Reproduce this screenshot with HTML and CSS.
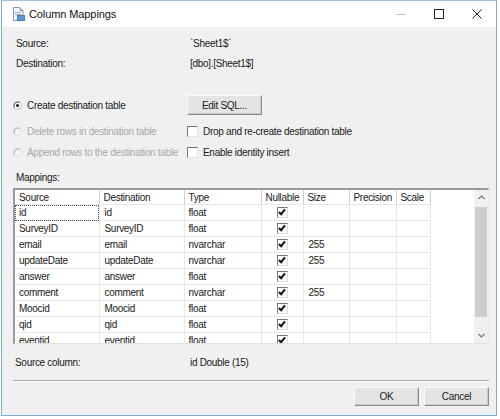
FILE: index.html
```html
<!DOCTYPE html>
<html>
<head>
<meta charset="utf-8">
<link rel="stylesheet" href="styles.css">
</head>
<body>
<div class="window">
  <div class="titlebar">
    <svg class="appicon" width="13" height="14" viewBox="0 0 13 14">
      <path d="M1.5 0.5h6.5l3 3v10h-9.5z" fill="#f4f7fa" stroke="#8a9bb0"/>
      <path d="M8 0.5v3h3" fill="none" stroke="#8a9bb0"/>
      <rect x="3" y="5" width="6" height="1" fill="#9fb2c8"/>
      <rect x="3" y="7" width="6" height="1" fill="#9fb2c8"/>
      <rect x="5.5" y="8.5" width="7" height="5" fill="#5b9bd5" stroke="#3a6ea5" stroke-width="0.8"/>
    </svg>
    <span class="title">Column Mappings</span>
    <div class="controls">
      <span class="ctl"><svg width="10" height="10" viewBox="0 0 10 10"><path d="M0 5.5h10" stroke="#c4c4c4"/></svg></span>
      <span class="ctl"><svg width="10" height="10" viewBox="0 0 10 10"><rect x="0.5" y="0.5" width="9" height="9" fill="none" stroke="#222"/></svg></span>
      <span class="ctl"><svg width="10" height="10" viewBox="0 0 10 10"><path d="M0.5 0.5l9 9M9.5 0.5l-9 9" stroke="#222"/></svg></span>
    </div>
  </div>
  <div class="body">
    <div class="info">
      <div class="kv"><span class="k">Source:</span><span class="v">`Sheet1$`</span></div>
      <div class="kv"><span class="k">Destination:</span><span class="v">[dbo].[Sheet1$]</span></div>
    </div>
    <div class="options">
      <div class="opt opt1">
        <label class="radio"><svg width="9" height="9" viewBox="0 0 9 9"><circle cx="4.5" cy="4.5" r="4" fill="#fff" stroke="#bbb"/><path d="M1.3 6.5A4 4 0 0 1 6.5 1.3" fill="none" stroke="#555"/><circle cx="4.5" cy="4.5" r="1.5" fill="#111"/></svg>Create destination table</label>
        <span class="btn edit">Edit SQL...</span>
      </div>
      <div class="opt">
        <label class="radio disabled"><svg width="9" height="9" viewBox="0 0 9 9"><circle cx="4.5" cy="4.5" r="4" fill="#f4f4f4" stroke="#ddd"/><path d="M1.3 6.5A4 4 0 0 1 6.5 1.3" fill="none" stroke="#aaa"/></svg>Delete rows in destination table</label>
        <label class="check"><span class="box"></span>Drop and re-create destination table</label>
      </div>
      <div class="opt">
        <label class="radio disabled"><svg width="9" height="9" viewBox="0 0 9 9"><circle cx="4.5" cy="4.5" r="4" fill="#f4f4f4" stroke="#ddd"/><path d="M1.3 6.5A4 4 0 0 1 6.5 1.3" fill="none" stroke="#aaa"/></svg>Append rows to the destination table</label>
        <label class="check"><span class="box"></span>Enable identity insert</label>
      </div>
    </div>
    <div class="mlabel">Mappings:</div>
    <div class="grid">
      <div class="gridinner">
        <table>
          <colgroup>
            <col class="c1"><col class="c2"><col class="c3"><col class="c4"><col class="c5"><col class="c6"><col class="c7">
          </colgroup>
          <thead>
            <tr><th>Source</th><th>Destination</th><th>Type</th><th>Nullable</th><th>Size</th><th>Precision</th><th>Scale</th></tr>
          </thead>
          <tbody>
            <tr><td class="focus"><span>id</span></td><td>id</td><td>float</td><td class="nc"><i class="cb"></i></td><td></td><td></td><td></td></tr>
            <tr><td>SurveyID</td><td>SurveyID</td><td>float</td><td class="nc"><i class="cb"></i></td><td></td><td></td><td></td></tr>
            <tr><td>email</td><td>email</td><td>nvarchar</td><td class="nc"><i class="cb"></i></td><td>255</td><td></td><td></td></tr>
            <tr><td>updateDate</td><td>updateDate</td><td>nvarchar</td><td class="nc"><i class="cb"></i></td><td>255</td><td></td><td></td></tr>
            <tr><td>answer</td><td>answer</td><td>float</td><td class="nc"><i class="cb"></i></td><td></td><td></td><td></td></tr>
            <tr><td>comment</td><td>comment</td><td>nvarchar</td><td class="nc"><i class="cb"></i></td><td>255</td><td></td><td></td></tr>
            <tr><td>Moocid</td><td>Moocid</td><td>float</td><td class="nc"><i class="cb"></i></td><td></td><td></td><td></td></tr>
            <tr><td>qid</td><td>qid</td><td>float</td><td class="nc"><i class="cb"></i></td><td></td><td></td><td></td></tr>
            <tr><td>eventid</td><td>eventid</td><td>float</td><td class="nc"><i class="cb"></i></td><td></td><td></td><td></td></tr>
          </tbody>
        </table>
      </div>
      <div class="scroll">
        <svg class="arrow" width="7" height="5" viewBox="0 0 7 5"><path d="M0.5 4L3.5 1L6.5 4" fill="none" stroke="#777" stroke-width="1.2"/></svg>
        <div class="track"><div class="thumb"></div></div>
        <svg class="arrow" width="7" height="5" viewBox="0 0 7 5"><path d="M0.5 1L3.5 4L6.5 1" fill="none" stroke="#777" stroke-width="1.2"/></svg>
      </div>
    </div>
    <div class="kv srccol"><span class="k">Source column:</span><span class="v">id Double (15)</span></div>
    <div class="sep"></div>
    <div class="buttons">
      <span class="btn">OK</span>
      <span class="btn">Cancel</span>
    </div>
  </div>
</div>
</body>
</html>
```

FILE: styles.css
```css
html, body {
  margin: 0;
  padding: 0;
  background: #ffffff;
}
body {
  font-family: "Liberation Sans", Arial, sans-serif;
  font-size: 10px;
  letter-spacing: -0.3px;
  color: #1a1a1a;
}
.window {
  margin-left: 1px;
  width: 496px;
  height: 416px;
  border: 1px solid #7aaed6;
  border-top-color: #9cc3e2;
  background: #f0f0f0;
  display: flex;
  flex-direction: column;
  box-sizing: border-box;
}
.titlebar {
  height: 26px;
  background: #ffffff;
  display: flex;
  align-items: center;
  flex-shrink: 0;
}
.appicon {
  margin-left: 10px;
  margin-right: 4px;
}
.title {
  font-family: "Liberation Sans", Arial, sans-serif;
  font-size: 11px;
  letter-spacing: -0.1px;
  color: #111;
}
.controls {
  margin-left: auto;
  display: flex;
  height: 100%;
}
.ctl {
  width: 38px;
  display: flex;
  align-items: center;
  justify-content: center;
}
.ctl:last-child { width: 38px; margin-right: 0; }
.body {
  padding: 6px 8px 0 11px;
  display: flex;
  flex-direction: column;
  flex: 1;
}
.info .kv { height: 20px; }
.kv {
  display: flex;
  align-items: center;
  white-space: nowrap;
}
.k {
  width: 174px;
  padding-left: 3px;
}
.options {
  margin-top: 20px;
}
.opt {
  display: flex;
  align-items: center;
  height: 21px;
  white-space: nowrap;
}
.opt1 {
  height: 24px;
  margin-bottom: 4px;
}
.radio {
  width: 174px;
  display: flex;
  align-items: center;
  padding-left: 0;
}
.radio svg {
  margin-right: 5px;
  flex-shrink: 0;
}
.radio.disabled {
  color: #a8a8a8;
}
.check {
  display: flex;
  align-items: center;
}
.box {
  width: 9px;
  height: 9px;
  background: #fff;
  border-top: 1px solid #777;
  border-left: 1px solid #777;
  border-right: 1px solid #e4e4e4;
  border-bottom: 1px solid #e4e4e4;
  margin-right: 5px;
}
.btn {
  display: inline-flex;
  align-items: center;
  justify-content: center;
  box-sizing: border-box;
  width: 65px;
  height: 19px;
  background: #e4e4e4;
  border-top: 1px solid #fbfbfb;
  border-left: 1px solid #fbfbfb;
  border-right: 1px solid #8c8c8c;
  border-bottom: 1px solid #8c8c8c;
  box-shadow: inset -1px -1px 0 #c8c8c8;
}
.btn.edit {
  width: 75px;
  height: 20px;
}
.mlabel {
  height: 16px;
  margin-top: 6px;
  padding-left: 3px;
  display: flex;
  align-items: center;
}
.grid {
  margin-top: 3px;
  width: 476px;
  height: 156px;
  box-sizing: border-box;
  border-top: 2px solid #9a9a9a;
  border-left: 2px solid #9a9a9a;
  border-right: 1px solid #e8e8e8;
  border-bottom: 1px solid #e2e2e2;
  background: #fff;
  display: flex;
  overflow: hidden;
}
.gridinner {
  flex: 1;
  overflow: hidden;
}
table {
  border-collapse: collapse;
  table-layout: fixed;
  width: 415px;
}
col.c1 { width: 84px; }
col.c2 { width: 85px; }
col.c3 { width: 77px; }
col.c4 { width: 42px; }
col.c5 { width: 46px; }
col.c6 { width: 47px; }
col.c7 { width: 34px; }
th {
  height: 14px;
  font-weight: normal;
  text-align: left;
  padding: 0 0 0 4px;
  border-right: 1px solid #d0d0d0;
  border-bottom: 1px solid #e6e6e6;
  white-space: nowrap;
  overflow: hidden;
}
td {
  height: 15px;
  padding: 0 0 0 4px;
  border-right: 1px solid #e8e8e8;
  border-bottom: 1px solid #e8e8e8;
  white-space: nowrap;
  overflow: hidden;
}
td:nth-child(2) { padding-left: 5px; }
td:nth-child(5) { padding-left: 5px; }
td.focus {
  outline: 1px dotted #555;
  outline-offset: -1px;
}
td.nc {
  padding: 0;
  text-align: center;
}
.cb {
  display: inline-block;
  vertical-align: middle;
  width: 9px;
  height: 9px;
  box-sizing: content-box;
  background: #fff;
  border-top: 1px solid #777;
  border-left: 1px solid #777;
  border-right: 1px solid #e0e0e0;
  border-bottom: 1px solid #e0e0e0;
  position: relative;
  margin-left: 1px;
}
.cb::after {
  content: "";
  position: absolute;
  left: 2px;
  top: 0px;
  width: 2px;
  height: 5px;
  border-right: 2px solid #111;
  border-bottom: 2px solid #111;
  transform: rotate(40deg);
}
.scroll {
  width: 14px;
  background: #f0f0f0;
  display: flex;
  flex-direction: column;
  align-items: center;
}
.arrow {
  margin: 5px 0;
  flex-shrink: 0;
}
.track {
  flex: 1;
  width: 100%;
}
.thumb {
  margin: 2px 1px 0 1px;
  height: 110px;
  background: #cdcdcd;
}
.srccol {
  height: 19px;
  margin-top: 9px;
}
.srccol .k { width: 175px; padding-left: 2px; }
.sep {
  width: 476px;
  height: 0;
  border-top: 1px solid #a8a8a8;
  border-bottom: 1px solid #fdfdfd;
  margin-top: 8px;
}
.buttons {
  display: flex;
  justify-content: flex-end;
  gap: 5px;
  width: 476px;
  margin-top: 5px;
}
```
